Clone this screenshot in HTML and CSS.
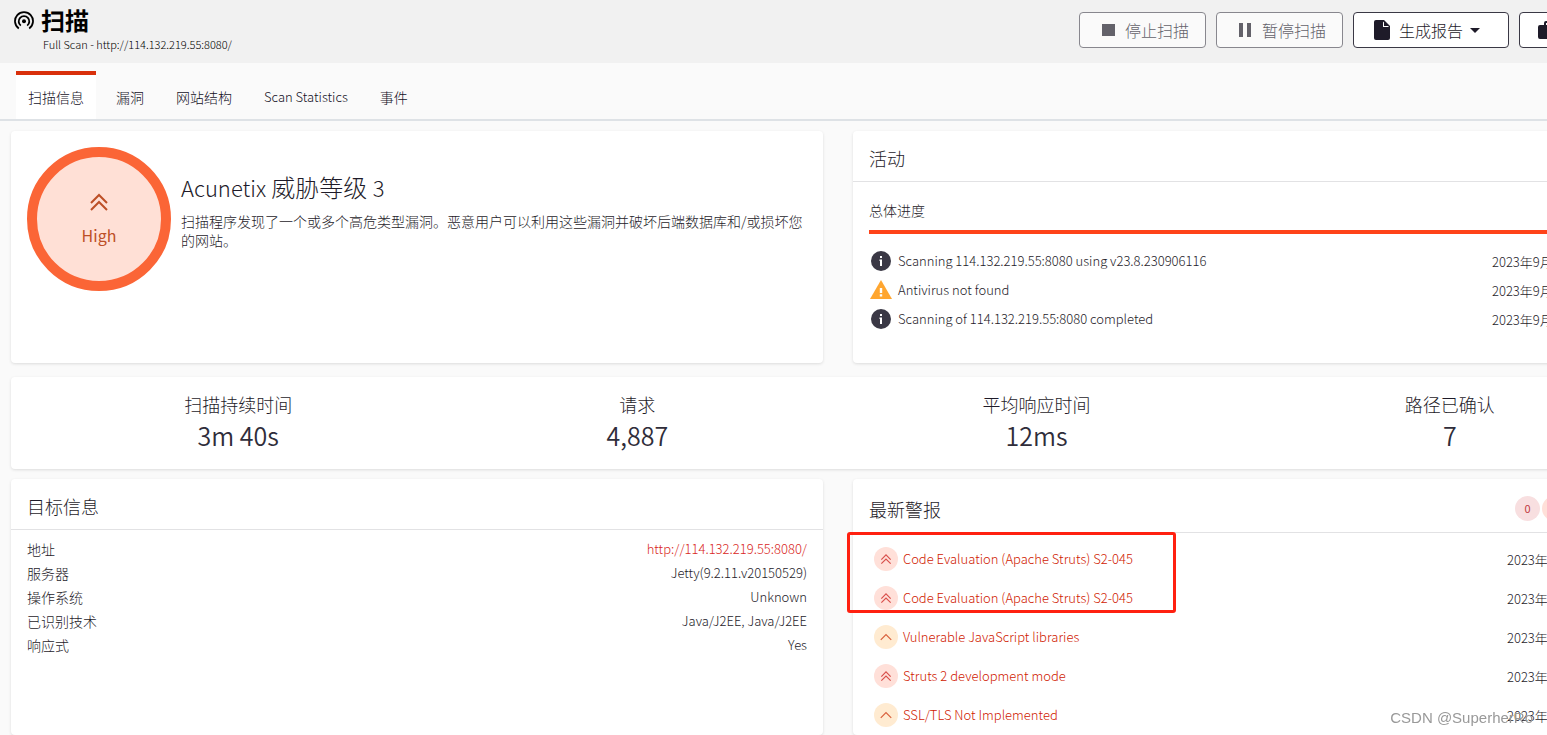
FILE: index.html
```html
<!DOCTYPE html>
<html lang="zh-CN">
<head>
<meta charset="utf-8">
<title>扫描</title>
<link rel="stylesheet" href="styles.css">
</head>
<body>
<svg class="sprite" aria-hidden="true">
  <symbol id="double-up" viewBox="0 0 24 24"><path d="M4 13 12 5l8 8M4 20l8-8 8 8"/></symbol>
  <symbol id="single-up" viewBox="0 0 24 24"><path d="m3 17 9-9 9 9"/></symbol>
  <symbol id="info" viewBox="0 0 20 20"><circle cx="10" cy="10" r="10"/><path fill="#fff" d="M9 5h2v2H9zM8.500 8.500H11V15H9v-5h-.5z"/></symbol>
  <symbol id="warning" viewBox="0 0 22 20"><path d="M11 0 22 19H0z"/><path fill="#fff" d="M9.800 8h2.400v5H9.800zM9.800 14.200h2.400v2.300H9.800z"/></symbol>
</svg>
<div class="page">
  <header class="topbar">
    <div class="heading">
      <svg class="heading-icon" viewBox="0 0 20 20" aria-hidden="true"><g fill="none" stroke="#000" stroke-width="1.800"><path d="M4.800 18.500A9 9 0 1 1 15.200 18.500"/><path d="M6.800 15.600A5.300 5.300 0 1 1 13.200 15.600"/></g><circle cx="10" cy="11.300" r="2"/></svg>
      <h1>扫描</h1>
      <p>Full Scan - http://114.132.219.55:8080/</p>
    </div>
    <div class="actions">
      <button class="btn" disabled><svg viewBox="0 0 20 20" aria-hidden="true"><path d="M4 4h13v12H4z"/></svg>停止扫描</button>
      <button class="btn" disabled><svg viewBox="0 0 20 20" aria-hidden="true"><path d="M4 3h4v14H4zM12 3h4v14h-4z"/></svg>暂停扫描</button>
      <button class="btn btn-menu"><svg viewBox="0 0 20 20" aria-hidden="true"><path d="M4 0h8l6 6v12a2 2 0 0 1-2 2H4a2 2 0 0 1-2-2V2a2 2 0 0 1 2-2z"/><path fill="#fff" d="M11 1.500V7h6l-1-1h-4V2.500z"/></svg>生成报告<span class="caret"></span></button>
      <button class="btn btn-more" aria-label="导出"><svg viewBox="0 0 20 20" aria-hidden="true"><path d="M2 5h4V3a2 2 0 0 1 2-2h4a2 2 0 0 1 2 2v2h4a2 2 0 0 1 2 2v10a2 2 0 0 1-2 2H2a2 2 0 0 1-2-2V7a2 2 0 0 1 2-2zm6-2v2h4V3z"/></svg></button>
    </div>
  </header>
  <nav class="tabs">
    <a class="tab active" href="#info-panel">扫描信息</a>
    <a class="tab" href="#vulnerabilities">漏洞</a>
    <a class="tab" href="#structure">网站结构</a>
    <a class="tab latin" href="#statistics">Scan Statistics</a>
    <a class="tab" href="#events">事件</a>
  </nav>
  <main class="content" id="info-panel">
    <section class="card threat">
      <div class="level">
        <svg aria-hidden="true"><use href="#double-up"/></svg>
        <span>High</span>
      </div>
      <div class="threat-text">
        <h2><span>Acunetix</span> 威胁等级 <span>3</span></h2>
        <p>扫描程序发现了一个或多个高危类型漏洞。恶意用户可以利用这些漏洞并破坏后端数据库和/或损坏您的网站。</p>
      </div>
    </section>
    <section class="card">
      <h2 class="card-title">活动</h2>
      <div class="activity">
        <p>总体进度</p>
        <div class="progress"></div>
        <ul>
          <li><svg class="info" aria-hidden="true"><use href="#info"/></svg><span>Scanning 114.132.219.55:8080 using v23.8.230906116</span><time>2023年9月</time></li>
          <li><svg class="warning" aria-hidden="true"><use href="#warning"/></svg><span>Antivirus not found</span><time>2023年9月</time></li>
          <li><svg class="info" aria-hidden="true"><use href="#info"/></svg><span>Scanning of 114.132.219.55:8080 completed</span><time>2023年9月</time></li>
        </ul>
      </div>
    </section>
    <section class="card stats">
      <div><h3>扫描持续时间</h3><p>3m 40s</p></div>
      <div><h3>请求</h3><p>4,887</p></div>
      <div><h3>平均响应时间</h3><p>12ms</p></div>
      <div><h3>路径已确认</h3><p>7</p></div>
    </section>
    <section class="card bottom">
      <h2 class="card-title">目标信息</h2>
      <dl class="target">
        <div><dt>地址</dt><dd><a href="http://114.132.219.55:8080/">http://114.132.219.55:8080/</a></dd></div>
        <div><dt>服务器</dt><dd>Jetty(9.2.11.v20150529)</dd></div>
        <div><dt>操作系统</dt><dd>Unknown</dd></div>
        <div><dt>已识别技术</dt><dd>Java/J2EE, Java/J2EE</dd></div>
        <div><dt>响应式</dt><dd>Yes</dd></div>
      </dl>
    </section>
    <section class="card bottom alerts">
      <div class="card-title alerts-title"><h2>最新警报</h2><div class="counts"><span class="critical">0</span><span class="high"></span></div></div>
      <ul>
        <li><span class="severity high"><svg aria-hidden="true"><use href="#double-up"/></svg></span><a href="#alert-1">Code Evaluation (Apache Struts) S2-045</a><time>2023年9月</time></li>
        <li><span class="severity high"><svg aria-hidden="true"><use href="#double-up"/></svg></span><a href="#alert-2">Code Evaluation (Apache Struts) S2-045</a><time>2023年9月</time></li>
        <li><span class="severity medium"><svg aria-hidden="true"><use href="#single-up"/></svg></span><a href="#alert-3">Vulnerable JavaScript libraries</a><time>2023年9月</time></li>
        <li><span class="severity high"><svg aria-hidden="true"><use href="#double-up"/></svg></span><a href="#alert-4">Struts 2 development mode</a><time>2023年9月</time></li>
        <li><span class="severity medium"><svg aria-hidden="true"><use href="#single-up"/></svg></span><a href="#alert-5">SSL/TLS Not Implemented</a><time>2023年9月</time></li>
      </ul>
      <div class="highlight"></div>
    </section>
  </main>
</div>
<div class="watermark">CSDN @SuperherRo</div>
</body>
</html>
```

FILE: styles.css
```css
* { box-sizing: border-box; }
body {
  margin: 0;
  height: 100vh;
  overflow: hidden;
  background: #fafafa;
  color: #1e1b29;
  font: 300 14px/20px "Noto Sans CJK SC", sans-serif;
}
h1, h2, h3, p, ul, dl, dd { margin: 0; padding: 0; font-size: inherit; font-weight: inherit; }
ul { list-style: none; }
a { color: inherit; text-decoration: none; }
.sprite { display: none; }

/* The dashboard runs past the right edge of the window. */
.page {
  width: calc(100vw + 132px);
  min-height: 100vh;
  display: flex;
  flex-direction: column;
}

.topbar {
  display: flex;
  justify-content: space-between;
  height: 63px;
  padding: 0 11px 0 14px;
  background: #f1f1f1;
  color: #000;
}
.heading {
  display: grid;
  grid-template-columns: 20px auto;
  column-gap: 7px;
  align-content: start;
  align-items: center;
  padding-top: 4px;
}
.heading-icon { width: 20px; height: 20px; }
.heading h1 { font-size: 24px; line-height: 32px; font-weight: 700; }
.heading p { grid-column: 2; padding-left: 2px; font-size: 11px; line-height: 16px; }

.actions { display: flex; gap: 10px; padding-top: 12px; }
.btn {
  display: flex;
  align-items: center;
  height: 36px;
  padding: 0 16px 0 18px;
  border: 1px solid #3a3845;
  border-radius: 4px;
  background: #fff;
  color: #1e1b29;
  font: inherit;
  font-size: 16px;
}
.btn svg { width: 20px; height: 20px; margin-right: 7px; fill: currentColor; }
.btn:disabled { background: #fafafa; border-color: #88878e; color: #63626a; }
.btn-menu { padding-right: 28px; }
.btn-more { width: 149px; }
.caret { margin-left: 7px; border: 5px solid transparent; border-top-color: currentColor; border-bottom: 0; }

.tabs {
  display: flex;
  padding: 8px 16px 0;
  border-bottom: 2px solid #dee2e6;
  color: #14111f;
}
.tab { height: 48px; padding: 11px 12px 0; margin-right: 8px; border-top: 4px solid transparent; line-height: 22px; }
.tab.active { border-top-color: #d9300b; background: #fff; }
.tab.latin { font-size: 13px; }

.content {
  flex: 1;
  display: grid;
  grid-template-columns: 812fr 815fr;
  grid-template-rows: 232px 106px 1fr;
  column-gap: 30px;
  padding: 10px 11px 0;
}
.card {
  position: relative;
  border-radius: 4px;
  background: #fff;
  box-shadow: 0 1px 3px rgba(0, 0, 0, .12);
}
.card-title {
  height: 51px;
  padding: 13px 16px 0;
  border-bottom: 1px solid #e2e2e4;
  font-size: 18px;
  line-height: 28px;
}

.threat { display: flex; align-items: flex-start; gap: 10px; padding: 16px; }
.level {
  flex: none;
  display: flex;
  flex-direction: column;
  align-items: center;
  width: 144px;
  height: 144px;
  padding-top: 33px;
  border: 10px solid #fb6536;
  border-radius: 50%;
  background: #ffe0d6;
  color: #bd4f26;
  font-size: 16px;
  font-weight: 400;
  line-height: 24px;
}
.level svg { width: 24px; height: 24px; margin-bottom: 9px; fill: none; stroke: currentColor; stroke-width: 2; }
.threat-text h2 { padding-top: 24px; font-size: 24px; line-height: 32px; }
.threat-text h2 span { font-size: 22px; }
.threat-text p { padding-top: 9px; line-height: 19px; }

.activity { padding: 18px 16px; }
.progress { height: 4px; margin: 10px 0 12px; background: #ff4319; }
.activity li { display: flex; align-items: center; height: 29px; }
.activity li svg { width: 20px; height: 20px; margin: 0 7px 0 2px; fill: #3a3845; }
.activity li svg.warning { width: 22px; margin: 0 6px 0 1px; fill: #ffa630; }
.activity span, .alerts li a { flex: 1; font-size: 13px; }
time { font-size: 13px; padding-top: 2px; }
.activity time { width: 160px; }

.stats {
  grid-column: 1 / -1;
  display: flex;
  justify-content: space-around;
  margin-top: 14px;
  padding: 13px 16px;
  text-align: center;
}
.stats h3 { font-size: 18px; line-height: 28px; }
.stats p { font-size: 25px; line-height: 34px; font-weight: 350; color: #2f2d3a; }

.bottom { margin-top: 10px; }
.target { padding: 7px 16px; }
.target div { display: flex; justify-content: space-between; line-height: 24px; }
.target dd { font-size: 13px; }
.target a { color: #d9271c; }

.alerts-title { display: flex; justify-content: space-between; height: 54px; padding-top: 16px; }
.counts { display: flex; gap: 2px; width: 137px; padding-top: 1px; }
.counts span { width: 25px; height: 25px; border-radius: 50%; font-size: 11px; line-height: 25px; font-weight: 400; text-align: center; }
.counts .critical { background: #f8dfe0; color: #c23b40; }
.high { background: #ffe0d9; }
.medium { background: #ffebd1; }
.alerts ul { padding: 6px 16px 0 21px; }
.alerts li { display: flex; align-items: center; height: 39px; gap: 5px; }
.alerts li a { color: #d02000; }
.alerts time { width: 145px; }
.severity { display: grid; place-items: center; width: 24px; height: 24px; border-radius: 50%; color: #d9504c; }
.severity.medium { color: #d9603c; }
.severity svg { width: 14px; height: 14px; fill: none; stroke: currentColor; stroke-width: 2; }
.highlight {
  position: absolute;
  top: 53px;
  left: -6px;
  width: 329px;
  height: 81px;
  border: 3px solid #ff2010;
  border-radius: 3px;
}
.watermark {
  position: fixed;
  right: 14px;
  bottom: 7px;
  color: #999;
  font: 15px/20px "Liberation Sans", sans-serif;
}
```
